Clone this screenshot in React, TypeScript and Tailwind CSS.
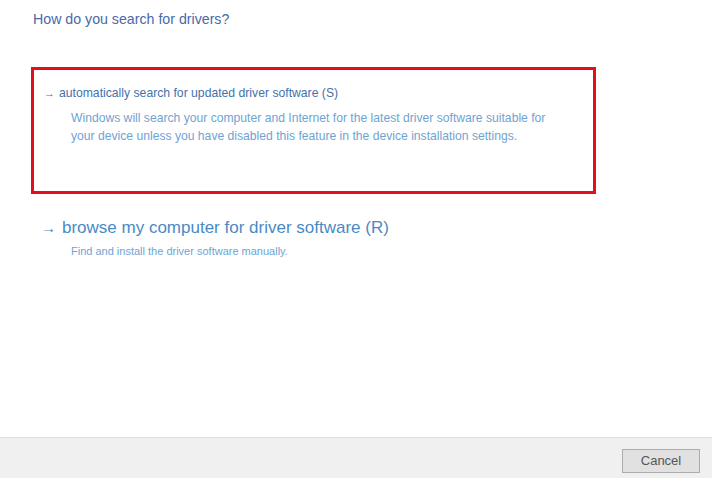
import React from "react";

export default function App() {
  return (
    <div
      className="w-[715px] h-[478px] bg-white flex flex-col overflow-hidden"
      style={{ fontFamily: '"Liberation Sans", Arial, sans-serif' }}
    >
      <div className="flex-1">
        <div className="pt-[11px] pl-[33px] text-[14.2px] leading-[17px] text-[#4a6aa8]">
          How do you search for drivers?
        </div>
        <div className="ml-[31px] mt-[39px] w-[565px] h-[127px] border-[3px] border-[#e3101c] pl-[10px] pt-[16px]">
          <div className="flex items-center text-[12.2px] leading-[14px] text-[#3f72ad]">
            <span className="mr-[4px] text-[11px]">→</span>
            <span>automatically search for updated driver software (S)</span>
          </div>
          <div className="mt-[9px] pl-[27px] text-[12.15px] leading-[18px] text-[#6fa3d2]">
            Windows will search your computer and Internet for the latest driver software suitable for
            <br />
            your device unless you have disabled this feature in the device installation settings.
          </div>
        </div>
        <div className="mt-[24px] pl-[41px] flex items-center text-[17px] leading-[20px] text-[#4a8ac4]">
          <span className="mr-[6px] text-[15px]">→</span>
          <span>browse my computer for driver software (R)</span>
        </div>
        <div className="mt-[7px] pl-[71px] text-[11px] leading-[13px] text-[#6fa3d2]">
          Find and install the driver software manually.
        </div>
      </div>
      <div className="h-[41px] w-[712px] bg-[#f0f0f0] border-t border-[#dfdfdf] flex justify-end items-start pt-[11px] pr-[12px]">
        <button className="w-[78px] h-[24px] bg-[#e1e1e1] border border-[#adadad] text-[13px] text-[#555] leading-[20px]">
          Cancel
        </button>
      </div>
    </div>
  );
}
